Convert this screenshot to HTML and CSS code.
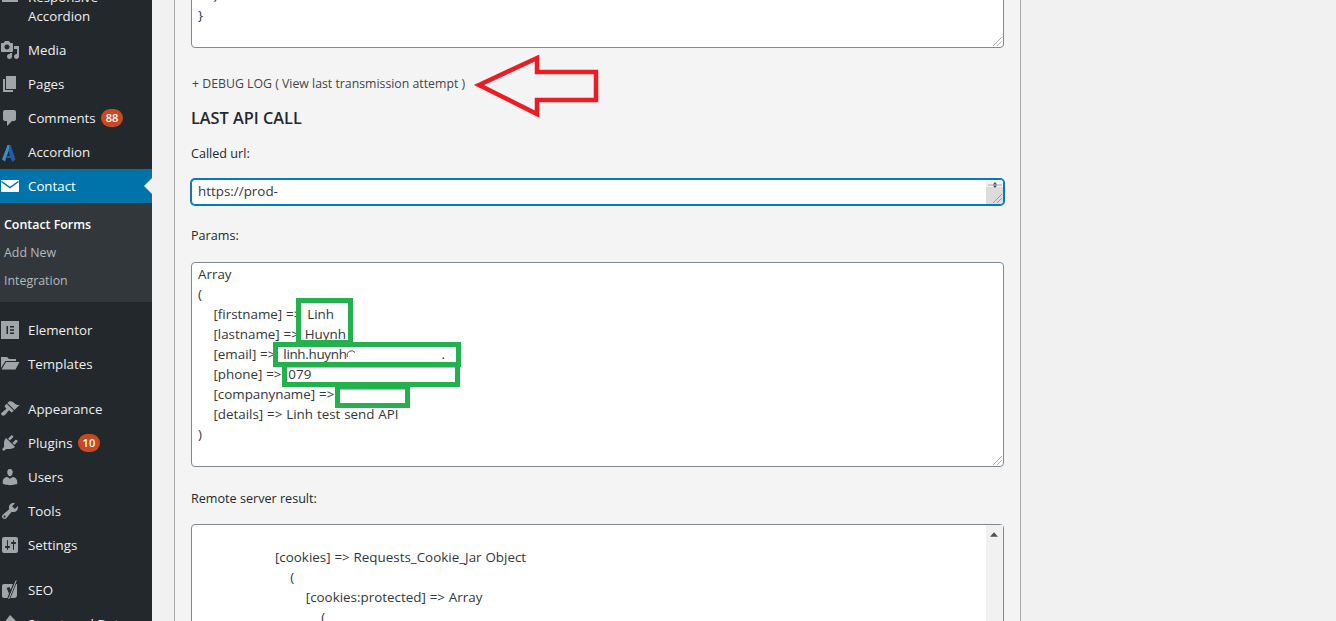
FILE: index.html
```html
<!DOCTYPE html>
<html lang="en">
<head>
<meta charset="utf-8">
<title>Contact Form Integration</title>
<link rel="stylesheet" href="styles.css">
</head>
<body>
<div class="wrap">
  <nav class="sidebar">
    <ul class="menu">
      <li class="item tall"><svg class="ico tall-ico" viewBox="0 0 20 20"><path d="M2 3h16v14H2zM4 5v2h12V5zM4 9v6h12V9z" fill-rule="evenodd"/></svg><span>Responsive<br>Accordion</span></li>
      <li class="item"><svg class="ico" viewBox="0 0 20 20"><path d="M13 11V4c0-.55-.45-1-1-1h-1.67L9 1H5L3.67 3H2c-.55 0-1 .45-1 1v7c0 .55.45 1 1 1h10c.55 0 1-.45 1-1zM7 4.5c1.38 0 2.5 1.12 2.5 2.5S8.38 9.5 7 9.5 4.5 8.38 4.5 7 5.62 4.5 7 4.5zM14 6h5v10.5c0 1.38-1.12 2.5-2.5 2.5S14 17.88 14 16.5s1.12-2.5 2.5-2.5c.17 0 .34.02.5.05V9h-3V6zm-4 8.05V13h2v3.5c0 1.38-1.12 2.5-2.5 2.5S7 17.88 7 16.5 8.12 14 9.5 14c.17 0 .34.02.5.05z"/></svg><span>Media</span></li>
      <li class="item"><svg class="ico" viewBox="0 0 20 20"><path d="M6 15V2h10v13H6zm-1 1h8v2H3V5h2v11z"/></svg><span>Pages</span></li>
      <li class="item"><svg class="ico" viewBox="0 0 20 20"><path d="M5 2h9c1.1 0 2 .9 2 2v7c0 1.1-.9 2-2 2h-2l-5 5v-5H5c-1.1 0-2-.9-2-2V4c0-1.1.9-2 2-2z"/></svg><span>Comments</span><b class="badge">88</b></li>
      <li class="item"><svg class="ico" viewBox="0 0 20 20"><path class="acc-b" d="M12.500 20L15.500 17.500 10.500 3H7.500L9.800 14H7.500L7 16H10.500z"/><path class="acc-a" d="M7.500 3L2 17.500 5 19.500 8.800 8.500 9.300 3z"/></svg><span>Accordion</span></li>
      <li class="item active"><svg class="ico" viewBox="0 0 20 20"><path class="env" d="M2 4h16c.55 0 1 .45 1 1v10c0 .55-.45 1-1 1H2c-.55 0-1-.45-1-1V5c0-.55.45-1 1-1z"/><path class="env-v" d="M1.500 5.500L10 11.500l8.500-6"/></svg><span>Contact</span></li>
      <li class="sub">
        <a class="sub-link current">Contact Forms</a>
        <a class="sub-link">Add New</a>
        <a class="sub-link">Integration</a>
      </li>
      <li class="item gap"><svg class="ico" viewBox="0 0 20 20"><path d="M1 1h18v18H1zM6.500 6v8H8V6zM10 6v1.500h4V6zM10 9.250v1.500h4v-1.500zM10 12.500V14h4v-1.500z" fill-rule="evenodd"/></svg><span>Elementor</span></li>
      <li class="item"><svg class="ico" viewBox="0 0 20 20"><path d="M1 3h6l2 2h7v2H5.500L1 14zM6 8h13.500l-4 7.500H1.500z"/></svg><span>Templates</span></li>
      <li class="item gap"><svg class="ico" viewBox="0 0 20 20"><path d="M14.480 11.060L7.410 3.990l1.500-1.500c.5-.56 2.300-.47 3.510.32 1.210.8 1.430 1.280 2.910 2.100 1.180.64 2.450 1.260 4.450.85zm-.71.71L6.700 4.700 4.930 6.470c-.39.39-.39 1.020 0 1.410l1.060 1.060c.39.39.39 1.030 0 1.420-.6.6-1.430 1.110-2.210 1.690-.35.26-.7.53-1.010.84C1.430 13.230.4 14.810 1.700 16.110s2.880.27 4.220-1.070c.31-.31.58-.66.84-1.010.58-.78 1.090-1.610 1.690-2.210.39-.39 1.020-.39 1.410 0l1.060 1.060c.39.39 1.020.39 1.410 0z"/></svg><span>Appearance</span></li>
      <li class="item"><svg class="ico" viewBox="0 0 20 20"><path d="M13.110 4.360L9.870 7.600 8 5.730l3.240-3.240c.35-.34 1.050-.2 1.560.32.52.51.66 1.210.31 1.550zm-8 1.770l.91-1.120 9.010 9.010-1.190.84c-.71.71-2.630 1.160-3.820 1.160H6.140L4.900 17.260c-.59.59-1.540.59-2.120 0-.59-.58-.59-1.530 0-2.120l1.240-1.240v-3.880c0-1.130.4-3.190 1.090-3.890zm7.260 3.970l3.240-3.240c.34-.35 1.040-.21 1.550.31.52.51.66 1.210.31 1.550l-3.240 3.250z"/></svg><span>Plugins</span><b class="badge">10</b></li>
      <li class="item"><svg class="ico" viewBox="0 0 20 20"><path d="M10 9.250c-2.270 0-2.730-3.440-2.730-3.440C7 4.020 7.820 2 9.970 2c2.160 0 2.980 2.020 2.710 3.810 0 0-.41 3.440-2.680 3.440zm0 2.570L12.720 10c2.390 0 4.520 2.330 4.520 4.530v2.490s-3.650 1.130-7.240 1.130c-3.650 0-7.240-1.130-7.240-1.130v-2.490c0-2.250 1.940-4.480 4.470-4.480z"/></svg><span>Users</span></li>
      <li class="item"><svg class="ico" viewBox="0 0 20 20"><path d="M16.680 9.770c-1.340 1.340-3.300 1.670-4.950.99l-5.410 6.520c-.99.99-2.590.99-3.580 0s-.99-2.590 0-3.570l6.520-5.420c-.68-1.650-.35-3.610.99-4.950 1.280-1.280 3.120-1.620 4.720-1.060l-2.890 2.890 2.820 2.820 2.860-2.870c.53 1.580.18 3.390-1.080 4.650zM3.810 16.210c.4.39 1.040.39 1.430 0 .4-.4.4-1.040 0-1.430-.39-.4-1.030-.4-1.430 0-.39.39-.39 1.030 0 1.430z"/></svg><span>Tools</span></li>
      <li class="item"><svg class="ico" viewBox="0 0 20 20"><path d="M18 16V4c0-1.100-.9-2-2-2H4c-1.100 0-2 .9-2 2v12c0 1.100.9 2 2 2h12c1.100 0 2-.9 2-2zM8 11h1c.55 0 1 .45 1 1s-.45 1-1 1H8v1.500c0 .28-.22.5-.5.5s-.5-.22-.5-.5V13H6c-.55 0-1-.45-1-1s.45-1 1-1h1V5.500c0-.28.22-.5.5-.5s.5.22.5.5V11zm5-2h-1c-.55 0-1-.45-1-1s.45-1 1-1h1V5.500c0-.28.22-.5.5-.5s.5.22.5.5V7h1c.55 0 1 .45 1 1s-.45 1-1 1h-1v5.500c0 .28-.22.5-.5.5s-.5-.22-.5-.5V9z"/></svg><span>Settings</span></li>
      <li class="item gap"><svg class="ico" viewBox="0 0 20 20"><path d="M4 4h13v11c0 2-1 3-3 3H4c-1.200 0-2-.8-2-2V6c0-1.200.8-2 2-2z"/><path class="yoast-dark" d="M16 .5L8.500 19M8 7.500l3 7"/><path class="yoast-light" d="M16.200 .5L8.700 19"/></svg><span>SEO</span></li>
      <li class="item"><svg class="ico" viewBox="0 0 20 20"><path d="M10 1l9 9-3 9H3l-2-6z"/></svg><span>Structured Data</span></li>
    </ul>
  </nav>

  <main class="panel">
    <div class="code first"><div class="text">    )
}</div><svg class="grip" viewBox="0 0 9 9"><path d="M.5 8.500l8-8M4.500 8.500l4-4"/></svg></div>

    <div class="debug-row">
      <p class="debug">+ DEBUG LOG ( View last transmission attempt )</p>
      <svg class="arrow" viewBox="0 0 128 64"><path d="M5 31L63 4v14h59v28H63v14z"/></svg>
    </div>

    <h2 class="title">LAST API CALL</h2>

    <p class="label called">Called url:</p>
    <div class="code url">
      <div class="text">https://prod-</div>
      <div class="url-bar"><svg class="spin" viewBox="0 0 14 6"><path class="spin-line" d="M0 3h14"/><path d="M5 2.500L7 0l2 2.500zM5 3.500L7 6l2-2.500z"/></svg></div>
      <svg class="grip" viewBox="0 0 9 9"><path d="M.5 8.500l8-8M4.500 8.500l4-4"/></svg>
    </div>

    <p class="label">Params:</p>
    <div class="code params">
      <div class="text">Array
(
    [firstname] =&gt; <span class="v-first">Linh</span>
    [lastname] =&gt; <span class="v-last">Huynh</span>
    [email] =&gt; <span class="v-email">linh.huynh</span><span class="v-dot">.</span>
    [phone] =&gt; <span class="v-phone">079</span>
    [companyname] =&gt;
    [details] =&gt; Linh test send API
)</div>
      <svg class="marks" viewBox="0 0 190 112">
        <path class="mark" d="M1.500 2.500h52v42h-52zM-21.500 46.500h183v20h-183zM-12.500 67h173v19.500h-173zM40.500 89h70v18.500h-70z"/>
        <path class="trace" d="M58 54.500a4.500 4.500 0 0 0-5-1.500 4.500 4.500 0 0 0-2.500 6"/>
      </svg>
      <svg class="grip" viewBox="0 0 9 9"><path d="M.5 8.500l8-8M4.500 8.500l4-4"/></svg>
    </div>

    <p class="label remote-label">Remote server result:</p>
    <div class="code remote">
      <div class="text">
                    [cookies] =&gt; Requests_Cookie_Jar Object
                        (
                            [cookies:protected] =&gt; Array
                                (</div>
      <div class="bar"><svg class="up" viewBox="0 0 7 4"><path d="M3.500 0L7 4H0z"/></svg></div>
    </div>
  </main>
</div>
</body>
</html>
```

FILE: styles.css
```css
* { box-sizing: border-box; }
html, body { margin: 0; height: 100%; overflow: hidden; }
body { background: #f1f1f1; font-family: "Open Sans", "Liberation Sans", sans-serif; color: #32373c; }
.wrap { display: flex; height: 621px; overflow: hidden; }

/* sidebar */
.sidebar { width: 152px; flex: none; background: #23282d; height: 100%; overflow: hidden; }
.menu { list-style: none; margin: -19px 0 0; padding: 0; }
.item { position: relative; display: flex; align-items: center; height: 34px; font-size: 13.3px; line-height: 19px; color: #eee; white-space: nowrap; }
.item.tall { height: 52px; padding-bottom: 7px; align-items: flex-end; }
.item.gap { margin-top: 11px; }
.ico { flex: none; width: 20px; height: 20px; margin-right: 8px; fill: #a0a5aa; }
.tall-ico { align-self: flex-start; margin-top: 4px; }
.acc-a { fill: #3a8ccf; }
.acc-b { fill: #1f5fa8; }
.yoast-dark { fill: none; stroke: #23282d; stroke-width: 3; }
.yoast-light { fill: none; stroke: #b4b9be; stroke-width: 1; }
.badge { display: inline-block; margin-left: 5px; min-width: 18px; height: 18px; padding: 0 5px; border-radius: 9px; background: #ca4a1f; color: #fff; font-size: 11px; font-weight: 600; line-height: 18px; text-align: center; }
.active { background: #0073aa; color: #fff; }
.active::after { content: ""; position: absolute; right: 0; top: 9px; border: 8px solid transparent; border-right-color: #f1f1f1; border-left-width: 0; }
.env { fill: #fff; }
.env-v { fill: none; stroke: #0073aa; stroke-width: 1.5; }
.sub { display: flex; flex-direction: column; padding: 8px 0 7px; background: #32373c; }
.sub-link { display: block; height: 28px; padding-left: 4px; font-size: 12.4px; line-height: 28px; color: #b4b9be; }
.sub-link.current { color: #fff; font-weight: 600; }

/* panel */
.panel { width: 847px; flex: none; margin-left: 22px; height: 1000px; padding: 0 16px; background: #f4f4f4; border: 1px solid #a9a9a9; border-width: 0 1px; }
.code { position: relative; width: 813px; background: #fff; border: 1px solid #7e8993; border-radius: 4px; font-size: 13.4px; line-height: 20px; color: #32373c; word-spacing: .37px; }
.text { padding: 1px 6px; white-space: pre; }
.grip { position: absolute; right: 1px; bottom: 1px; width: 9px; height: 9px; fill: none; stroke: #6a6a6a; stroke-width: 1; stroke-dasharray: 1 .5; }
.first { height: 65px; margin-top: -17px; }

.debug-row { position: relative; margin-top: 25px; height: 20px; }
.debug { margin: 0; padding: 1px 0 0 1px; font-size: 12.3px; line-height: 20px; color: #444; }
.arrow { position: absolute; left: 283px; top: -19px; width: 128px; height: 64px; fill: none; stroke: #ed1c24; stroke-width: 4.5; }

.title { margin: 14px 0 0; font-size: 16.3px; font-weight: 600; line-height: 22px; color: #23282d; }
.label { margin: 22px 0 0; font-size: 12.6px; font-weight: 400; line-height: 18px; color: #23282d; }
.label.called { margin-top: 16px; }
.label.remote-label { margin-top: 23px; }

.url { height: 26px; margin-top: 16px; border-color: #007cba; box-shadow: 0 0 0 1px #007cba; overflow: hidden; }
.url-bar { position: absolute; right: 0; top: 0; bottom: 0; width: 17px; background: #dcdcdc; border-top: 7px solid #f1f1f1; }
.spin { position: absolute; left: 2px; top: -5px; width: 14px; height: 6px; fill: #505050; }
.spin-line { stroke: #a8a8a8; stroke-width: 1; fill: none; }

.params { height: 205px; margin-top: 17px; }
.v-first { margin-left: 2px; }
.v-last { margin-left: 2px; }
.v-email { margin-left: 4px; letter-spacing: -.3px; }
.v-phone { margin-left: 3px; }
.v-dot { margin-left: 95px; }
.marks { position: absolute; left: 105px; top: 35px; width: 190px; height: 112px; overflow: visible; }
.mark { fill: none; stroke: #22b14c; stroke-width: 5; }
.trace { fill: none; stroke: #555; stroke-width: 1; }

.remote { height: 300px; margin-top: 16px; }
.remote .text { padding-top: 2px; }
.bar { position: absolute; right: 0; top: 0; bottom: 0; width: 17px; background: #f1f1f1; }
.up { position: absolute; left: 4px; top: 7px; width: 8px; height: 5px; fill: #505050; }
```
